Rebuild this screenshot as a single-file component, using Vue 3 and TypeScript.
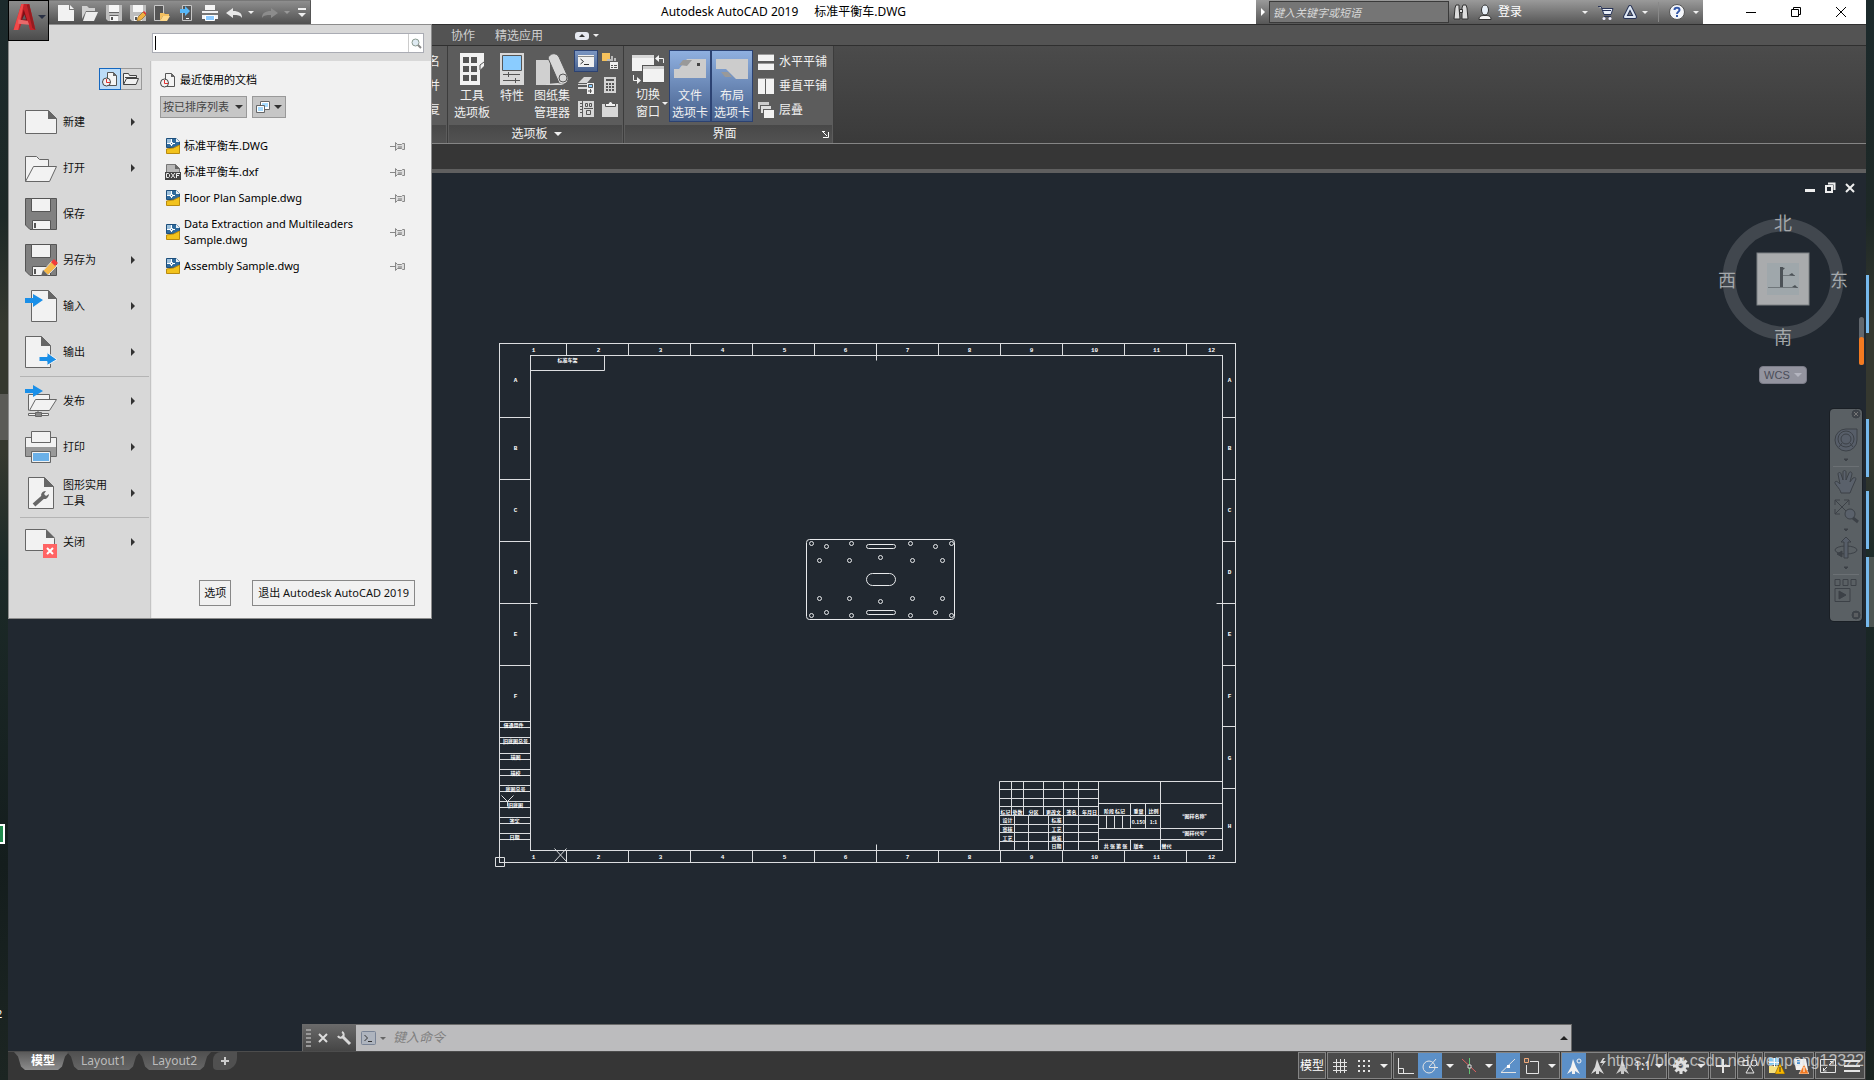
<script setup lang="ts">
import { ref } from 'vue'

interface MenuEntry { label: string; icon: string; arrow: boolean; sep?: boolean }
interface RecentFile { name: string; kind: 'dwg' | 'dxf' }
interface Line { x1: number; y1: number; x2: number; y2: number }
interface Label { x: number; y: number; t: string }

const G = 'fill="#f2f2f2" stroke="#666"'
const S = 'fill="none" stroke="#e4e4e4"'
const ARROW_R = 'fill="#1a8fe8"'

const icons: Record<string, string> = {
  logo: '<path fill="#c4232a" d="M12 1h10l8 25h-7l-2-6h-9l-3 6H2z"/><path fill="#f04a4a" d="M12 1h3L8 26H2z"/><path fill="#7e0f16" d="M15 6l-4 12h9z"/><path fill="#5d5d5d" d="M16 11l-3 5h5z"/><path fill="#e8696a" d="M8 16l12 1 2 4-14-1z"/><path fill="#961c20" d="M19 2l3-1 8 25-4-2z"/>',
  qnew: '<path fill="#f2f2f2" d="M0 2h11v5h5v11H0z"/><path fill="#f2f2f2" d="M12 2l4 4h-4z"/>',
  qopen: '<path fill="#d0d0d0" d="M0 3h5l2 2h6v3H4L0 16z"/><path fill="#ededed" d="M4 9h12l-4 9H1z"/>',
  qsave: '<path fill="#bdbdbd" d="M0 2h16v16H2l-2-2z"/><path fill="#f5f5f5" d="M3 2h10v7H3zM4 13h8v5H4z"/><path fill="#555" d="M5 14h2v3H5z"/><path stroke="#666" d="M3 9.500h10M3.500 12.500h9"/>',
  qsaveas: '<path fill="#bdbdbd" d="M0 2h16v16H2l-2-2z"/><path fill="#f5f5f5" d="M3 2h10v7H3zM4 13h8v5H4z"/><path fill="#555" d="M5 14h2v3H5z"/><path fill="#f0b040" stroke="#7a5a20" stroke-width=".6" d="M7 18l1-4 5-5 3 3-5 5z"/><path fill="#e83030" d="M13 9l1-1 3 3-1 1z"/>',
  qmobopen: '<path fill="#555" stroke="#c8c8c8" d="M.5 2.500h9v15h-9z"/><path fill="#f4c060" d="M6 10h4l1 1h4v2h-6l-3 5z"/><path fill="#ffd98a" d="M9 13h7l-3 5H6z"/>',
  qmobsave: '<path fill="#555" stroke="#c8c8c8" d="M4.500 2.500h9v15h-9z"/><path fill="#f2f2f2" d="M8 15h3v1H8z"/><path fill="#58b8f8" d="M2 6h5V3l5 5-5 5v-3H2z"/>',
  qprint: '<path fill="#f4f4f4" d="M3 2h10v5H3zM0 8h16v8H0z"/><path fill="#777" d="M0 10h16v2H0z"/><path fill="#8ccaff" stroke="#fff" d="M3.500 12.500h9v5h-9z"/>',
  undo: '<path fill="#e8e8e8" d="M0 9l7-5v3c6 0 9 2 9 7-2-3-4-3-9-3v3z"/>',
  redo: '<path fill="#8c8c8c" d="M16 9L9 4v3C3 7 0 9 0 14c2-3 4-3 9-3v3z"/>',
  mnew: `<path ${G} d="M.5 4.500h23l8 8v15H.5z"/><path fill="#666" d="M23 4l9 9h-9z"/>`,
  mopen: `<path ${G} d="M.5 29.500v-25h11l3 3h9v9"/><path ${G} d="M.5 29.500l8-15h23l-7 15z"/>`,
  msave: '<path fill="#808080" stroke="#555" d="M.5.500h31v31H5l-4.500-4.500z"/><path fill="#f2f2f2" stroke="#555" d="M6.500.500h19v13h-19zM7.500 22.500h18v9h-18z"/><path fill="#555" d="M9 25h2v5H9z"/>',
  msaveas: '<path fill="#808080" stroke="#555" d="M.5.500h31v31H5l-4.500-4.500z"/><path fill="#f2f2f2" stroke="#555" d="M6.500.500h19v13h-19zM7.500 22.500h18v9h-18z"/><path fill="#555" d="M9 25h2v5H9z"/><path fill="#f6b84a" stroke="#d8d8d8" d="M18 27l9-10 5 5-9 9z"/><path fill="#666" d="M16 32l2-6 5 5z"/><path fill="#f03a3a" d="M26 18l3-3 4 4-3 3z"/>',
  mimport: `<path ${G} d="M6.500.500h17l8 8v23h-25z"/><path fill="#666" d="M23 0l9 9h-9z"/><path ${ARROW_R} d="M0 8h8V4l10 6-10 7v-4H0z"/>`,
  mexport: `<path ${G} d="M.5.500h16l9 9v22H.500z"/><path fill="#666" d="M16 0l10 10H16z"/><path ${ARROW_R} stroke="#f2f2f2" d="M14 20.500h8v-4l10 7-10 6v-4h-8z"/>`,
  mpublish: `<path ${G} d="M3.500 25.500v-16h21v6"/><path ${G} d="M4.500 25.500l6-11h21l-7 11z"/><path ${ARROW_R} d="M0 4h8V0l10 6-10 6V8H0z"/><path ${G} d="M3.500 28.500h20v2h-20z"/><path fill="#888" stroke="#666" d="M10.500 27.500h6v4h-6zM13 26v1"/>`,
  mprint: `<path fill="#f2f2f2" stroke="#666" d="M.5 6.500h31v19H.5z"/><path fill="#999" d="M1 16h30v9H1z"/><path ${G} d="M6.500.500h19v11h-19z"/><path fill="#6ab0e8" stroke="#666" d="M6.500 20.500h19v11h-19z"/><path fill="none" stroke="#f2f2f2" d="M7.500 21.500h17v9h-17z"/>`,
  mutil: `<path ${G} d="M3.500.500h16l9 9v22h-25z"/><path fill="#666" d="M19 0l10 10H19z"/><path fill="none" stroke="#666" stroke-width="4" d="M9 28l9-8"/><path fill="#666" d="M16 18a5 5 0 0 1 5-4l-2 3 2 2 3-2a5 5 0 0 1-6 5z"/>`,
  mclose: `<path ${G} d="M.5 3.500h20l9 9v12H.5z"/><path fill="#666" d="M21 3l9 9h-9z"/><path fill="#ff6464" d="M18 18h14v14H18z"/><path stroke="#fff" stroke-width="2" d="M22 22l6 6M28 22l-6 6"/>`,
  recent: '<path fill="#f4f4f4" stroke="#555" d="M5.500.500h6l3 3v10h-9z"/><path fill="#666" d="M11 0l4 4h-4z"/><circle cx="4.500" cy="10" r="4" fill="#f2f2f2" stroke="#444"/><path fill="none" stroke="#e03030" d="M4.500 7v3.500H8"/>',
  folder: '<path fill="#f0f0f0" stroke="#444" d="M.5 13.500v-11h5l1 2h7v3"/><path fill="#f0f0f0" stroke="#444" d="M.5 13.500l3-6h12l-2.500 6z"/><path stroke="#444" d="M2 6.500h11"/>',
  dwg: '<path fill="#2f6a9c" stroke="#1d4f7c" d="M1.500.500h10l3 3v6h-13z"/><path fill="#9cc0dc" d="M2 1h4v4H2z"/><path stroke="#fff" fill="none" d="M6.500 1v7M2 5.500h8"/><path fill="#2f6a9c" stroke="#fff" d="M5.500 4.500h2v2h-2z"/><path fill="#f2c21c" stroke="#b88a10" d="M1.500 11l7-1 6-3v8.500h-13z"/><path fill="#e6eef5" d="M11 0l4 4h-4z"/>',
  dxf: '<path fill="#b8b8b8" stroke="#777" d="M1.500.500h9l4 4v11h-13z"/><path fill="#666" d="M10 0l5 5h-5z"/><path fill="#444" d="M0 8h16v8H0z"/><path fill="none" stroke="#eee" d="M1.500 9.500v4h2l1-1v-2l-1-1zM6 9l4 5M10 9l-4 5M11.500 14V9.500H15M11.500 11.500H14"/>',
  pin: '<path stroke="#888" fill="none" d="M0 5.500h5"/><path stroke="#888" fill="#ddd" d="M5.500 1.500v8l2-2h4l1 1h2v-6h-2l-1 1h-4z"/><path fill="#aaa" d="M8 5h4v2H8z"/>',
  magnifier: '<circle cx="4.500" cy="4.500" r="3.500" fill="#dfeaf2" stroke="#8a9a90"/><path stroke="#888" stroke-width="2" d="M7 7l3 3"/>',
  cascade: '<path fill="#a8dcff" stroke="#fff" stroke-width="2" d="M5 1h8v6H5z"/><path fill="none" stroke="#666" d="M4.500.500h9v8h-9z"/><path fill="#a8dcff" stroke="#666" d="M.5 4.500h8v7h-8z"/><path fill="none" stroke="#fff" d="M1.500 5.500h6v5h-6z"/>',
  toolpal: '<path fill="#f2f2f2" d="M0 0h24v13l-4 4v15H0z"/><path fill="#555" d="M3 4h6v6H3zM11 4h6v6h-6zM3 13h6v6H3zM11 13h6v6h-6zM3 22h6v6H3zM11 22h6v6h-6z"/><path stroke="#555" fill="none" d="M20 17v-5l4-3"/>',
  props: '<path fill="#d8d8d8" d="M0 0h24v32H0z"/><path fill="#8accff" stroke="#555" d="M2.500 2.500h19v15h-19z"/><path stroke="#555" d="M3 21.500h17M3 27.500h17M8.500 19v5M15.500 25v5"/>',
  sheets: '<path fill="#d0d0d0" d="M0 7h14v25H0z"/><path fill="#d8d8d8" stroke="#5a5a5a" d="M12 5c2-5 8-6 11-1l9 20c1 7-6 9-9 6z"/><path fill="#d8d8d8" d="M10 31l12-1 6 2H10z"/><circle cx="27" cy="25" r="4" fill="#d8d8d8" stroke="#555"/>',
  cmd: '<path fill="#f0f0f0" d="M0 2h16v12H0z"/><path stroke="#888" d="M0 3.500h16"/><path stroke="#333" fill="none" d="M2.500 6l3 2.500-3 2.500M6 11.500h5"/>',
  markup: '<path fill="#f6c25c" d="M0 0h8v8H0z"/><path fill="#bbb" d="M5 6h6v2H5zM9 3h2v9H9zM12 5h2v3h-2z"/><path fill="#f0f0f0" stroke="#5a5a5a" d="M7.500 8.500h9v8h-9z"/><path stroke="#555" d="M9 12.500h2M12 12.500h3M9 14.500h2M12 14.500h3"/>',
  layers: '<path fill="#d8d8d8" d="M6 0h8l-5 6H0zM0 7h9v1H0zM0 10h9v2H0z"/><path fill="#f0f0f0" d="M9 6h7v11H9z"/><path fill="#8accff" stroke="#555" d="M10.500 7.500h4v3h-4z"/><path stroke="#555" d="M10 14h4M12.500 12v4"/>',
  calc: '<path fill="#d4d4d4" d="M2 0h12v16H2z"/><path fill="#555" d="M4 2h8v2H4zM4 6h2v2H4zM7 6h2v2H7zM10 6h2v2h-2zM4 9h2v2H4zM7 9h2v2H7zM10 9h2v2h-2zM4 12h2v2H4zM7 12h2v2H7zM10 12h2v2h-2z"/>',
  design: '<path fill="#d8d8d8" d="M0 0h4v16H0zM5 0h11v16H5z"/><path stroke="#555" fill="none" d="M2 2.500h2M2 5.500h2M2 8.500h2M2 11.500h2M7.500 2.500h2v3h-2zM11.500 2.500h2v3h-2zM8.500 9.500h4v4h-4zM6 7.500h9"/>',
  clip: '<path fill="#d8d8d8" d="M0 3h16v13H0z"/><path fill="#f2f2f2" stroke="#555" d="M3.500 2.500h3l1-2h2l1 2h3v3h-10z"/>',
  switchwin: '<path fill="#d8d8d8" d="M0 2h22v3H0z"/><path fill="#f2f2f2" d="M0 5h22v13H0z"/><path fill="#555" d="M10 12h22v18H10z"/><path fill="#ccc" d="M11 13h21v3H11z"/><path fill="#f2f2f2" d="M11 16h21v13H11z"/><path stroke="#f2f2f2" fill="none" d="M31.500 10V5.500H26M1.500 22v5.500H6"/><path fill="#f2f2f2" d="M23 5.500l4-3.500v7zM9 27.500L5 24v7z"/>',
  filetab: '<path fill="#ccc" d="M0 11h5l8-10h19v19H0z"/><path fill="#999" d="M5 7l4-5h9l-5 6z"/><path fill="#444" d="M23 5h3v3h-3z"/>',
  layouttab: '<path fill="#ccc" d="M0 2h32v20H20L10 12H0z"/><path fill="#999" d="M5 15h7l4 5H9z"/>',
  tileh: '<path fill="#f2f2f2" d="M0 0h16v7H0zM0 9h16v7H0z"/><path stroke="#999" d="M0 .500h16M0 9.500h16"/>',
  tilev: '<path fill="#f2f2f2" d="M0 0h7v16H0zM8 0h8v16H8z"/><path stroke="#999" d="M0 .500h16"/>',
  stack: '<path fill="#ccc" d="M0 0h11v3H2v4H0z"/><path fill="#ddd" d="M3 4h10v3H5v4H3z"/><path fill="#f2f2f2" d="M6 8h10v8H6z"/>',
  binoc: '<path fill="#ddd" stroke="#333" d="M3 1h3v3l1 11H1L2 4zM10 1h3l1 3 1 11H9V4z"/><path fill="#ddd" stroke="#333" d="M6.500 5.500h3v3h-3z"/>',
  person: '<ellipse cx="8" cy="6" rx="3.500" ry="5" fill="#e8f0f8" stroke="#333"/><path fill="#f4f4f4" stroke="#333" d="M2 15.500c0-4 3-4 6-4s6 0 6 4z"/>',
  cart: '<path fill="#e8eef8" stroke="#2a3558" d="M1 2.500h3l3 8h7l2-6H5"/><path stroke="#2a3558" stroke-width="1" fill="none" d="M6 6.500h8M7 12.500h7"/><circle cx="7" cy="14.500" r="1.500" fill="#eef"/><circle cx="13" cy="14.500" r="1.500" fill="#eef"/>',
  a360: '<path fill="none" stroke="#2a3558" stroke-width="4" stroke-linejoin="round" d="M8 3l5 10H3z"/><path fill="none" stroke="#dfe8f4" stroke-width="2" stroke-linejoin="round" d="M8 3l5 10H3z"/>',
  help: '<circle cx="8" cy="8" r="7.500" fill="#f4f6fa" stroke="#555"/><path fill="none" stroke="#3458a8" stroke-width="2" d="M5.500 6c0-3 5-3 5 0 0 2-2.500 1.500-2.500 4"/><path fill="#3458a8" d="M7 11h2v2H7z"/>',
  wrench: '<path stroke="#d8d8d8" stroke-width="3" d="M5 5l8 8"/><path fill="none" stroke="#d8d8d8" stroke-width="2" d="M5 1a3 3 0 1 1-4 4"/>',
  prompt: '<rect x=".5" y=".5" width="14" height="13" rx="1" fill="#aeb4be" stroke="#7a8496"/><path fill="none" stroke="#333" d="M3.500 4l3 3-3 3M7 10.500h4"/>',
  grid: `<path ${S} stroke-width="1" d="M4.500 1v14M8.500 1v14M12.500 1v14M1 4.500h14M1 8.500h14M1 12.500h14"/>`,
  dots: '<path fill="#e4e4e4" d="M2 2h2v2H2zM7 2h2v2H7zM12 2h2v2h-2zM2 7h2v2H2zM7 7h2v2H7zM12 7h2v2h-2zM2 12h2v2H2zM7 12h2v2H7zM12 12h2v2h-2z"/>',
  ortho: `<path ${S} d="M.5 0v15.500H16M.5 10.500h5v5"/>`,
  polar: `<circle cx="7" cy="9" r="6" ${S}/><path ${S} d="M7 9l7-8M7 9.500h9"/>`,
  iso: '<path stroke="#e06060" d="M1 1l14 13"/><path stroke="#60c070" d="M8.500 0v16"/><path fill="#333" stroke="#ddd" d="M7 7h3v3H7z"/>',
  otrack: `<path ${S} d="M15 1L1 14.500h15"/><path fill="#fff" d="M7 7h3v3H7z"/>`,
  osnap: `<path ${S} d="M6 3.500h8.500v12h-12V7"/><path fill="#555" stroke="#f0a878" d="M.5.500h4v4h-4z"/>`,
  annoA: '<path fill="#f2f2f2" d="M7 1l3 8 4 7-5-3v3H6v-3l-5 3 4-7z"/><circle cx="13" cy="3" r="2" fill="none" stroke="#f2f2f2"/>',
  annoB: '<path fill="#d8d8d8" d="M7 1l3 8 4 7-5-3v3H6v-3l-5 3 4-7z"/><path fill="#d8d8d8" d="M13 0l-3 5h3l-2 4 5-6h-3l2-3z"/>',
  annoC: '<path fill="#c8c8c8" d="M8 1l3 8 4 7-5-3v3H7v-3l-5 3 4-7z"/>',
  gear: '<circle cx="8" cy="8" r="4" fill="none" stroke="#e0e0e0" stroke-width="3"/><path stroke="#e0e0e0" stroke-width="3" d="M8 0v3M8 13v3M0 8h3M13 8h3M2.500 2.500l2 2M11.500 11.500l2 2M13.500 2.500l-2 2M4.500 11.500l-2 2"/>',
  plus: `<path ${S} stroke-width="2" d="M8 1v14M1 8h14"/>`,
  isolate: `<path ${S} d="M1 2.500h5v5H1zM8 8l4 7H4z"/><circle cx="12" cy="5" r="3" ${S}/>`,
  hw: '<path fill="#7cc4f4" d="M0 0h10v7H0z"/><path fill="#f4e080" d="M0 8h10v7H0z"/><path stroke="#fff" d="M0 4.500h10M5.500 0v9"/><path fill="#f8b800" stroke="#805800" stroke-width=".6" d="M11 5l5 11H6z"/><path stroke="#333" d="M11 9v5"/>',
  trust: '<path fill="#f0f0f0" d="M1 1h12l2 11H3z"/><path fill="#4a90d0" d="M4 2h3v4H4z"/><path fill="#f07820" stroke="#fff" stroke-width=".6" d="M11 6l5 10H6z"/><path stroke="#fff" d="M11 9v5"/>',
  clean: `<path ${S} d="M.5 1.500h15v13H.5z"/><path ${S} d="M9 7l4-4M10 3.500h3v3M7 9l-4 4M3.500 10v3h3"/>`,
  custom: '<path fill="#e4e4e4" d="M0 2h16v2H0zM0 7h16v2H0zM0 12h16v2H0z"/>',
}

const qat = ['qnew', 'qopen', 'qsave', 'qsaveas', 'qmobopen', 'qmobsave', 'qprint']

const menu: MenuEntry[] = [
  { label: '新建', icon: 'mnew', arrow: true },
  { label: '打开', icon: 'mopen', arrow: true },
  { label: '保存', icon: 'msave', arrow: false },
  { label: '另存为', icon: 'msaveas', arrow: true },
  { label: '输入', icon: 'mimport', arrow: true },
  { label: '输出', icon: 'mexport', arrow: true },
  { label: '发布', icon: 'mpublish', arrow: true, sep: true },
  { label: '打印', icon: 'mprint', arrow: true },
  { label: '图形实用工具', icon: 'mutil', arrow: true },
  { label: '关闭', icon: 'mclose', arrow: true, sep: true },
]

const recentFiles: RecentFile[] = [
  { name: '标准平衡车.DWG', kind: 'dwg' },
  { name: '标准平衡车.dxf', kind: 'dxf' },
  { name: 'Floor Plan Sample.dwg', kind: 'dwg' },
  { name: 'Data Extraction and Multileaders Sample.dwg', kind: 'dwg' },
  { name: 'Assembly Sample.dwg', kind: 'dwg' },
]

const smallTools = ['cmd', 'markup', 'layers', 'calc', 'design', 'clip']
const tiles = [
  { label: '水平平铺', icon: 'tileh' },
  { label: '垂直平铺', icon: 'tilev' },
  { label: '层叠', icon: 'stack' },
]

/* '▾' is a drop-down arrow, a leading '*' marks a tool that is switched on */
const statusGroups: string[][] = [
  ['模型'],
  ['grid', 'dots', '▾'],
  ['ortho', '*polar', '▾', 'iso', '▾', '*otrack', 'osnap', '▾'],
  ['*annoA', 'annoB', 'annoC', '1:1', '▾'],
  ['gear', '▾'],
  ['plus'],
  ['isolate'],
  ['hw', 'trust'],
  ['clean', 'custom'],
]
const bare = (s: string) => s.replace('*', '')

const search = ref('')
const command = ref('')
const keyword = ref('')

/* drawing sheet geometry */
const h = (y: number, x1: number, x2: number): Line => ({ x1, y1: y, x2, y2: y })
const v = (x: number, y1: number, y2: number): Line => ({ x1: x, y1, x2: x, y2 })
const cols = Array.from({ length: 11 }, (_, i) => 566 + i * 62)
const sheet: Line[] = [
  ...cols.map(x => v(x, 344, 356)),
  ...cols.map(x => v(x, 851, 863)),
  v(876, 344, 361), v(876, 845, 863),
  ...[418, 480, 542, 604, 666].map(y => h(y, 499, 530)),
  ...[418, 480, 542, 604, 666, 727, 789].map(y => h(y, 1222, 1235)),
  h(604, 499, 537), h(604, 1216, 1235),
  h(371, 530, 604), v(604, 356, 371),
  ...[722, 728, 738, 744, 754, 760, 770, 776, 786, 792, 802, 808, 818, 824, 834, 840].map(y => h(y, 499, 530)),
  h(782, 999, 1222), v(999, 782, 851),
  ...[790, 799, 807, 816, 825, 833, 842].map(y => h(y, 999, 1098)),
  ...[1011, 1023, 1043].map(x => v(x, 782, 816)),
  ...[1014, 1028, 1048].map(x => v(x, 816, 851)),
  ...[1063, 1078, 1098, 1160].map(x => v(x, 782, 851)),
  h(804, 1098, 1222), h(816, 1098, 1160), h(829, 1098, 1222), h(840, 1098, 1222),
  v(1130, 804, 829), v(1130, 840, 851), v(1145, 804, 829),
  ...[1106, 1114, 1122].map(x => v(x, 816, 829)),
]
const numX = [533, 598, 660, 722, 784, 845, 907, 969, 1031, 1094, 1156, 1211]
const marks: Label[] = [
  ...numX.flatMap((x, i) => [{ x, y: 352, t: String(i + 1) }, { x, y: 859, t: String(i + 1) }]),
  ...['A', 'B', 'C', 'D', 'E', 'F'].map((t, i) => ({ x: 515, y: [382, 450, 512, 574, 636, 698][i], t })),
  ...['A', 'B', 'C', 'D', 'E', 'F', 'G', 'H'].map((t, i) => ({ x: 1229, y: [382, 450, 512, 574, 636, 698, 760, 828][i], t })),
]
const notes: Label[] = [
  { x: 567, y: 362, t: '标准车架' }, { x: 513, y: 727, t: '借通用件' }, { x: 515, y: 743, t: '旧底图总号' },
  { x: 515, y: 759, t: '描图' }, { x: 515, y: 775, t: '描校' }, { x: 515, y: 791, t: '底图总号' },
  { x: 515, y: 807, t: '旧底图' }, { x: 514, y: 823, t: '签字' }, { x: 514, y: 839, t: '日期' },
  { x: 1005, y: 814, t: '标记' }, { x: 1017, y: 814, t: '处数' }, { x: 1033, y: 814, t: '分区' },
  { x: 1053, y: 814, t: '更改文' }, { x: 1071, y: 814, t: '签名' }, { x: 1089, y: 814, t: '年月日' },
  { x: 1007, y: 822, t: '设计' }, { x: 1007, y: 831, t: '审核' }, { x: 1007, y: 840, t: '工艺' },
  { x: 1056, y: 822, t: '标准' }, { x: 1056, y: 831, t: '工艺' }, { x: 1056, y: 840, t: '批准' }, { x: 1056, y: 848, t: '日期' },
  { x: 1114, y: 813, t: '阶段 标记' }, { x: 1138, y: 813, t: '重量' }, { x: 1153, y: 813, t: '比例' },
  { x: 1138, y: 824, t: '0.150' }, { x: 1153, y: 824, t: '1:1' }, { x: 1194, y: 818, t: '“图样名称”' },
  { x: 1194, y: 835, t: '“图样代号”' }, { x: 1115, y: 848, t: '共 张 第 张' }, { x: 1138, y: 848, t: '版本' }, { x: 1166, y: 848, t: '替代' },
]
const holes = [
  [811, 544], [826, 547], [851, 544], [910, 544], [935, 547], [951, 544],
  [819, 561], [849, 561], [880, 558], [912, 561], [942, 561],
].flatMap(([x, y]) => [[x, y], [x, 1160 - y]])
</script>

<template>
  <div class="desktop">
    <div class="edge edge-left">
      <i class="edge-block"></i><i class="edge-green"></i><span class="edge-num">2</span>
    </div>

    <div class="app">
      <header class="titlebar">
        <button class="app-btn" aria-label="应用程序菜单">
          <svg width="25" height="28" viewBox="0 0 32 27" preserveAspectRatio="none" v-html="icons.logo"></svg>
          <i class="tri navy"></i>
        </button>
        <nav class="qat">
          <button v-for="q in qat" :key="q" :aria-label="q"><svg width="16" height="20" v-html="icons[q]"></svg></button>
          <button aria-label="放弃"><svg width="16" height="18" v-html="icons.undo"></svg></button>
          <i class="tri small"></i>
          <button aria-label="重做"><svg width="16" height="18" v-html="icons.redo"></svg></button>
          <i class="tri small dim"></i>
          <span class="qat-more"><i class="bar"></i><i class="tri"></i></span>
        </nav>
        <h1 class="title"><span>Autodesk AutoCAD 2019</span><span>标准平衡车.DWG</span></h1>
        <div class="infocenter">
          <i class="tri right"></i>
          <input v-model="keyword" aria-label="搜索" placeholder="键入关键字或短语">
          <svg width="16" height="16" v-html="icons.binoc"></svg>
          <button class="login"><svg width="16" height="16" v-html="icons.person"></svg>登录</button>
          <i class="tri small"></i>
          <svg class="cart" width="17" height="17" v-html="icons.cart"></svg>
          <svg width="16" height="16" v-html="icons.a360"></svg>
          <i class="tri small near"></i>
          <span class="vsep"></span>
          <svg width="16" height="16" v-html="icons.help"></svg>
          <i class="tri small"></i>
        </div>
        <div class="winbtns">
          <button aria-label="最小化"><svg width="12" height="12"><path d="M1 6.500h10" stroke="#000" /></svg></button>
          <button aria-label="还原"><svg width="12" height="12"><path d="M1.500 3.500h7v7h-7zM3.500 3V1.500h7v7H9" fill="none" stroke="#000" /></svg></button>
          <button aria-label="关闭"><svg width="12" height="12"><path d="M1 1l10 10M11 1L1 11" stroke="#000" /></svg></button>
        </div>
      </header>

      <nav class="tabs">
        <a href="#">协作</a><a href="#">精选应用</a>
        <span class="pill"><i></i></span><i class="tri small"></i>
      </nav>

      <section class="ribbon">
        <div class="panel hidden-panel">
          <div class="panel-body clipped"><span>命名</span><span>合并</span><span>恢复</span></div>
          <div class="panel-title"></div>
        </div>
        <div class="panel palettes">
          <div class="panel-body">
            <button class="big"><svg width="24" height="32" v-html="icons.toolpal"></svg><span>工具<br>选项板</span></button>
            <button class="big"><svg width="24" height="32" v-html="icons.props"></svg><span>特性</span></button>
            <button class="big"><svg width="32" height="32" v-html="icons.sheets"></svg><span>图纸集<br>管理器</span></button>
            <div class="small-grid">
              <button v-for="(t, i) in smallTools" :key="t" :class="{ on: i === 0 }" :aria-label="t"><svg width="17" height="17" v-html="icons[t]"></svg></button>
            </div>
          </div>
          <div class="panel-title">选项板 <i class="tri"></i></div>
        </div>
        <div class="panel ui">
          <div class="panel-body">
            <button class="big switch"><svg width="32" height="31" v-html="icons.switchwin"></svg><span>切换<br>窗口</span><i class="tri small"></i></button>
            <button class="big on"><svg width="32" height="32" viewBox="0 -5 32 32" v-html="icons.filetab"></svg><span>文件<br>选项卡</span></button>
            <button class="big on"><svg width="32" height="32" viewBox="0 -4 32 32" v-html="icons.layouttab"></svg><span>布局<br>选项卡</span></button>
            <div class="tiles">
              <button v-for="t in tiles" :key="t.icon"><svg width="16" height="16" v-html="icons[t.icon]"></svg>{{ t.label }}</button>
            </div>
          </div>
          <div class="panel-title">界面
            <svg class="launcher" width="7" height="7"><path d="M0 .500h3M1 1l4 4M6.500 1v5.500H1" fill="none" stroke="#fff" /></svg>
          </div>
        </div>
      </section>
      <div class="strip"></div>

      <main class="canvas">
        <svg class="drawing">
          <g transform="translate(-7.500 -173.500)">
            <g class="ink">
              <rect x="499" y="344" width="736" height="519" /><rect x="530" y="356" width="692" height="495" />
              <line v-for="(l, i) in sheet" :key="i" v-bind="l" />
            </g>
            <g class="plate">
              <rect x="806" y="540" width="148" height="80" rx="3" />
              <circle v-for="(p, i) in holes" :key="i" :cx="p[0]" :cy="p[1]" r="2" />
              <rect x="866" y="545" width="29" height="4" rx="2" /><rect x="866" y="611" width="29" height="4" rx="2" />
              <rect x="866" y="574" width="29" height="12" rx="6" />
            </g>
            <g class="ucs">
              <path d="M495 858h9v9h-9zM499 863V812M499 863h51M554 849l12 13M566 849l-12 13M501 796l6 6 6-6M507 802v5" />
            </g>
            <text v-for="(m, i) in marks" :key="'m' + i" class="mark" :x="m.x" :y="m.y">{{ m.t }}</text>
            <text v-for="(n, i) in notes" :key="'n' + i" class="note" :x="n.x" :y="n.y">{{ n.t }}</text>
          </g>
        </svg>

        <div class="docbtns">
          <button aria-label="最小化"><svg width="12" height="12"><path d="M1 7h10v3H1z" fill="#eee" /></svg></button>
          <button aria-label="还原"><svg width="12" height="12"><path d="M2 4h6v6H2zM4 1.500h6.500V8" fill="none" stroke="#eee" stroke-width="2" /></svg></button>
          <button aria-label="关闭"><svg width="12" height="12"><path d="M2 2l8 8M10 2l-8 8" stroke="#eee" stroke-width="2" /></svg></button>
        </div>

        <div class="viewcube">
          <svg width="132" height="132">
            <circle cx="66" cy="66" r="54" fill="none" stroke="#41474e" stroke-width="13" />
            <rect x="40" y="40" width="52" height="52" fill="#a9abad" stroke="#7c8083" />
            <rect x="50" y="50" width="32" height="32" fill="#9fa7ab" />
            <path d="M63 54h3v20h-3z" fill="#4c5257" /><path d="M66 62h12v1H66zM51 74h30v1H51z" fill="#70777b" />
            <path d="M63 54l5 1-2 2zM72 62l3-2 3 3zM75 74l3-2 3 3z" fill="#4c5257" />
            <g class="compass"><text x="66" y="17">北</text><text x="66" y="131">南</text><text x="10" y="74">西</text><text x="122" y="74">东</text></g>
          </svg>
          <button class="wcs">WCS <i></i></button>
        </div>

        <div class="navbar">
          <svg width="32" height="212" fill="none" stroke="#3c4147" stroke-width="1">
            <circle cx="26" cy="5" r="4" fill="#3f444a" /><path d="M24 3l4 4M28 3l-4 4" stroke="#777" />
            <path d="M16 20h11v11a11 11 0 1 1-11-11z" fill="#575e69" /><circle cx="16" cy="30" r="8" /><circle cx="16" cy="30" r="5" /><path d="M12 34l-3 4M20 34l3 4" />
            <path d="M14 50h4l-2 2zM14 120h4l-2 2zM14 158h4l-2 2z" fill="#3c4147" />
            <path d="M3 57.500h26M3 165.500h26" stroke="#6b7074" />
            <path d="M11 84c-1-5-7-9-6-11s4 1 5 2L8 65c0-2 3-2 3 0l2 6V63c0-2 3-2 3 0v8l3-7c1-2 3-1 3 1l-2 8 3-4c2-1 3 0 3 1l-4 9-2 5z" fill="#5a616b" />
            <path d="M5 91l14 14M19 91L5 105M5 96v-5h5M14 91h5v5M5 100v5h5" /><circle cx="20" cy="105" r="5" fill="#5a616b" /><path d="M23 109l5 4" stroke-width="3" />
            <ellipse cx="16" cy="141" rx="11" ry="4" /><path d="M14 149v-16h-3l5-5 5 5h-3v16z" fill="#575e69" /><path d="M7 145l5-3v6z" fill="#3c4147" />
            <path d="M5 170.500h5v6H5zM13 170.500h5v6h-5zM21 170.500h5v6h-5zM5 179.500h15v13H5z" /><path d="M9 182l7 4-7 4z" fill="#3c4147" />
            <circle cx="26" cy="206" r="4" fill="#3f444a" /><path d="M24 205h4M24 207h4" stroke="#777" />
          </svg>
        </div>
        <div class="gauge"><i></i></div>

        <div class="cmdline">
          <div class="cmd-tools">
            <i class="grip"></i>
            <svg width="10" height="10"><path d="M1 1l8 8M9 1L1 9" stroke="#ddd" stroke-width="2" /></svg>
            <svg class="custom" width="15" height="15" v-html="icons.wrench"></svg>
          </div>
          <svg class="prompt" width="15" height="14" v-html="icons.prompt"></svg>
          <i class="tri small gray"></i>
          <input v-model="command" aria-label="命令行" placeholder="键入命令">
          <i class="up"></i>
        </div>
      </main>

      <footer class="bottom">
        <nav class="layouts">
          <button class="layout active">模型</button>
          <button class="layout">Layout1</button>
          <button class="layout">Layout2</button>
          <button class="layout add" aria-label="新建布局"><svg width="8" height="8"><path d="M4 0v8M0 4h8" stroke="#ccc" stroke-width="2" /></svg></button>
        </nav>
        <div class="status">
          <div v-for="(g, i) in statusGroups" :key="i" class="group">
            <template v-for="(s, j) in g" :key="j">
              <button v-if="s === '▾'" class="drop" aria-label="更多"><i class="tri"></i></button>
              <button v-else-if="icons[bare(s)]" class="tool" :class="{ on: s[0] === '*' }" :aria-label="bare(s)"><svg width="16" height="16" v-html="icons[bare(s)]"></svg></button>
              <button v-else class="word">{{ s }}</button>
            </template>
          </div>
        </div>
      </footer>

      <aside class="appmenu">
        <div class="search">
          <input v-model="search" aria-label="搜索命令"><i class="caret"></i>
          <button aria-label="搜索"><svg width="11" height="11" v-html="icons.magnifier"></svg></button>
        </div>
        <div class="menu-cols">
          <div class="menu-left">
            <div class="toggles">
              <button class="sel" aria-label="最近使用的文档"><svg width="16" height="15" v-html="icons.recent"></svg></button>
              <button aria-label="打开的文档"><svg width="16" height="16" v-html="icons.folder"></svg></button>
            </div>
            <button v-for="m in menu" :key="m.label" class="entry" :class="{ sep: m.sep }">
              <svg width="33" height="33" v-html="icons[m.icon]"></svg>
              <span>{{ m.label }}</span>
              <i v-if="m.arrow" class="tri right dark"></i>
            </button>
          </div>
          <div class="menu-right">
            <h2><svg width="16" height="15" v-html="icons.recent"></svg>最近使用的文档</h2>
            <div class="combos">
              <label class="combo"><select aria-label="排序"><option>按已排序列表</option></select><i class="tri dark"></i></label>
              <button class="combo view" aria-label="显示方式"><svg width="14" height="13" v-html="icons.cascade"></svg><i class="tri dark"></i></button>
            </div>
            <ul>
              <li v-for="f in recentFiles" :key="f.name">
                <svg width="16" height="16" v-html="icons[f.kind]"></svg>
                <a href="#">{{ f.name }}</a>
                <svg class="pin" width="16" height="11" v-html="icons.pin"></svg>
              </li>
            </ul>
            <div class="actions"><button>选项</button><button>退出 Autodesk AutoCAD 2019</button></div>
          </div>
        </div>
      </aside>
    </div>

    <div class="edge edge-right"><i class="b1"></i><i class="b2"></i><i class="b3"></i><i class="b4"></i></div>
    <div class="watermark">https://blog.csdn.net/wenpeng12322</div>
  </div>
</template>

<style>
body { margin: 0; background: #1b2425; }
</style>

<style scoped>
* { box-sizing: border-box; }
.desktop { position: relative; display: flex; min-height: 100vh; font: 12px/16px "Noto Sans", "Noto Sans CJK SC", sans-serif; color: #e6e6e6; }
button, input, select { font: inherit; color: inherit; border: 0; padding: 0; margin: 0; background: none; border-radius: 0; outline: 0; }
a { color: inherit; text-decoration: none; }
svg { display: block; flex: none; }
.edge { position: relative; width: 8px; flex: none; overflow: hidden; background: linear-gradient(#1c2a2c 0, #1d2826 20%, #35382f 30%, #35382f 42%, #1c2a28 52%, #141d1d 80%, #1c2522); }
.edge i, .edge span { position: absolute; }
.edge-block { left: 0; top: 394px; width: 8px; height: 46px; background: #5b5b57; }
.edge-green { left: -4px; top: 824px; width: 9px; height: 20px; border: 2px solid #fff; background: #1f8a4c; }
.edge-num { left: -4px; bottom: 58px; color: #fff; font-size: 11px; }
.edge-right i { left: 0; width: 3px; background: #76b9ed; }
.edge-right .b1 { top: 275px; height: 58px; }
.edge-right .b2 { top: 419px; height: 58px; }
.edge-right .b3 { top: 491px; height: 58px; }
.edge-right .b4 { top: 557px; height: 70px; width: 8px; border-left: 3px solid #76b9ed; background: #4d5653; }
.app { position: relative; flex: 1; min-width: 0; display: flex; flex-direction: column; }

.tri { flex: none; width: 0; height: 0; border: 4px solid transparent; border-top-color: #f0f0f0; border-bottom: 0; }
.tri.small { border-width: 3px; border-bottom: 0; }
.tri.dim { border-top-color: #999; }
.tri.gray { border-top-color: #666; }
.tri.dark { border-top-color: #333; }
.tri.navy { border-top-color: #2a3144; }
.tri.right { border: 4px solid transparent; border-left-color: #fff; border-right: 0; }
.tri.right.dark { border-left-color: #333; }

.titlebar { display: flex; height: 24px; background: #fff; color: #000; }
.app-btn { position: relative; z-index: 6; width: 41px; height: 41px; flex: none; display: flex; align-items: center; gap: 1px; padding: 0 0 8px 3px; border: 1px solid #000; background: linear-gradient(#8c8c8c, #4c4c4c); }
.qat { display: flex; align-items: center; gap: 8px; width: 262px; flex: none; padding-left: 9px; background: linear-gradient(#8e8e8e, #505050); border-top: 1px solid #777; border-right: 1px solid #555; }
.qat > .tri { margin-left: -2px; }
.qat-more { display: flex; flex-direction: column; align-items: center; gap: 3px; }
.qat-more .bar { width: 8px; height: 2px; background: #f0f0f0; }
.title { flex: 1; margin: 0; display: flex; justify-content: center; gap: 16px; font: 12px/24px "Noto Sans", "Noto Sans CJK SC", sans-serif; }
.infocenter { display: flex; align-items: center; width: 447px; flex: none; padding: 0 4px 0 5px; gap: 8px; background: linear-gradient(#9a9a9a, #565656); color: #fff; }
.infocenter input { width: 180px; height: 22px; padding-left: 3px; background: #757575; border: 1px solid #3a3a3a; font-style: italic; font-size: 11px; margin: 0 -4px; }
.infocenter input::placeholder { color: #d8d8d8; opacity: 1; }
.login { display: flex; align-items: center; gap: 5px; margin-right: auto; }
.cart { margin-left: 1px; }
.near { margin-left: -4px; }
.vsep { width: 1px; height: 20px; background: #888; margin: 0 2px; }
.winbtns { display: flex; width: 163px; flex: none; justify-content: flex-end; gap: 33px; padding-right: 19px; }

.tabs { display: flex; align-items: center; height: 22px; padding: 1px 0 0 443px; background: #535353; border-top: 1px solid #2f2f2f; border-bottom: 1px solid #2f2f2f; color: #d0d0d0; }
.tabs a { margin-right: 20px; }
.pill { width: 14px; height: 8px; margin: 0 4px 0 12px; border-radius: 3px; background: #e6e9f0; display: grid; place-items: center; }
.pill i { border: 3px solid transparent; border-bottom-color: #333; border-top: 0; }

.ribbon { display: flex; height: 97px; background: linear-gradient(#4b4b4b, #3a3a3a); color: #f0f0f0; }
.panel { display: flex; flex-direction: column; background: #5c5c5c; border-right: 1px solid #3c3c3c; flex: none; }
.hidden-panel { width: 440px; }
.palettes { width: 176px; }
.ui { width: 210px; }
.panel-body { flex: 1; display: flex; align-items: flex-start; padding: 4px 0 0 2px; }
.clipped { flex-direction: column; align-items: flex-end; padding: 8px 7px 0 0; gap: 8px; }
.panel-title { display: flex; align-items: center; justify-content: center; gap: 6px; height: 18px; margin: 0 1px; padding-left: 2px; background: linear-gradient(#484848, #525252); position: relative; }
.ui .panel-title { padding: 0 8px 0 0; }
.launcher { position: absolute; right: 3px; }
.big { width: 42px; height: 72px; flex: none; display: flex; flex-direction: column; align-items: center; padding-top: 3px; line-height: 17px; white-space: nowrap; position: relative; }
.big span { margin-top: 2px; }
.palettes .big { width: 44px; margin-right: -4px; }
.big.on { border: 1px solid #2c4272; background: linear-gradient(#8fb0e0, #46608c); padding-top: 2px; }
.ui .panel-body { padding-left: 3px; }
.switch .tri { position: absolute; right: 1px; top: 52px; }
.small-grid { display: grid; grid-template-columns: 24px 24px; grid-auto-rows: 24px; margin-left: 4px; }
.small-grid button { display: grid; place-items: center; height: 22px; }
.small-grid .on { background: linear-gradient(#7b96c2, #48618e); border: 1px solid #2c4272; }
.tiles { display: flex; flex-direction: column; gap: 8px; padding: 4px 0 0 5px; }
.tiles button { display: flex; align-items: center; gap: 5px; height: 16px; white-space: nowrap; }
.strip { height: 30px; background: #363636; border-top: 1px solid #858585; border-bottom: 4px solid #5f5f5f; }

.canvas { position: relative; flex: 1; min-height: 460px; background: #212830; overflow: hidden; }
.drawing { position: absolute; inset: 0; width: 100%; height: 100%; }
.ink, .plate, .ucs { fill: none; stroke: #dcdee0; stroke-width: 1; }
.plate { stroke: #e8eaec; }
.mark { fill: #fff; font: bold 6px "Liberation Mono", monospace; text-anchor: middle; }
.note { fill: #fff; font: bold 5px "Noto Sans CJK SC", sans-serif; text-anchor: middle; }
.docbtns { position: absolute; right: 10px; top: 9px; display: flex; gap: 8px; }
.viewcube { position: absolute; right: 17px; top: 40px; display: flex; flex-direction: column; align-items: center; }
.viewcube svg { overflow: visible; }
.compass { fill: #a4a8ab; font: 18px "Noto Sans CJK SC", sans-serif; text-anchor: middle; }
.wcs { margin-top: 21px; width: 48px; height: 18px; border-radius: 4px; background: #93949f; border: 1px solid #7b7c88; color: #4a4d58; font: 11px/16px "Liberation Sans", sans-serif; display: flex; align-items: center; justify-content: space-evenly; }
.wcs i { border: 4px solid transparent; border-top-color: #b4b5c0; border-bottom: 0; }
.navbar { position: absolute; right: 4px; top: 236px; width: 32px; height: 212px; border-radius: 4px; background: #5a6064; box-shadow: 0 0 0 1px #1a1f25; }
.gauge { position: absolute; right: 2px; top: 144px; width: 5px; height: 48px; border-radius: 3px; background: #62676d; display: flex; align-items: flex-end; }
.gauge i { width: 5px; height: 28px; border-radius: 3px; background: #f47a20; }

.cmdline { position: absolute; left: 294px; right: 294px; bottom: 0; height: 27px; display: flex; align-items: center; background: #bcbcbe; border: 1px solid #6a6a6a; border-bottom: 0; }
.cmd-tools { display: flex; align-items: center; gap: 7px; width: 53px; height: 100%; padding-left: 3px; background: linear-gradient(#696969, #454545); }
.grip { width: 5px; height: 18px; background: repeating-linear-gradient(#999 0 2px, transparent 2px 4px); }
.custom { margin-left: 2px; }
.prompt { margin: 0 4px 0 5px; }
.cmdline input { flex: 1; min-width: 0; padding: 0 0 2px 7px; font-style: italic; font-size: 13px; }
.cmdline input::placeholder { color: #808080; opacity: 1; }
.up { border: 4px solid transparent; border-bottom-color: #222; border-top: 0; margin-right: 3px; }

.bottom { display: flex; justify-content: space-between; height: 29px; background: #363636; border-top: 1px solid #4c4c4c; }
.layouts { display: flex; padding-left: 6px; }
.layout { height: 18px; padding: 0 14px; line-height: 18px; color: #bcbcbc; background: linear-gradient(#505050, #666); margin-right: -2px; clip-path: polygon(0 0, 100% 0, calc(100% - 4px) 25%, calc(100% - 7px) 80%, calc(100% - 11px) 100%, 11px 100%, 7px 80%, 4px 25%); }
.layout.active { position: relative; padding-left: 17px; background: linear-gradient(#5a5a5a, #8c8c8c); color: #fff; font-weight: bold; }
.layout.add { display: grid; place-items: center; width: 24px; padding: 0; margin-left: 4px; background: #505050; clip-path: none; border-radius: 8px 0 12px 4px; }
.status { display: flex; gap: 1px; padding-right: 1px; }
.group { display: flex; height: 27px; border: 1px solid #858585; background: #4b4b4b; }
.tool, .drop { width: 24px; display: grid; place-items: center; }
.drop { width: 15px; }
.tool.on { background: #5c90c8; }
.word { color: #fff; }
.group:first-child .word { padding: 0 1px; }

.appmenu { position: absolute; z-index: 5; left: 0; top: 24px; width: 424px; height: 595px; display: flex; flex-direction: column; background: #d8d8d8; border: 1px solid #8c8c8c; color: #111; font-size: 11px; }
.search { position: relative; display: flex; margin: 8px 7px 8px 143px; height: 20px; background: #fff; border: 1px solid #aaacb4; }
.search input { flex: 1; min-width: 0; padding-left: 4px; }
.caret { position: absolute; left: 2px; top: 2px; width: 1px; height: 14px; background: #000; }
.search button { width: 15px; border-left: 1px solid #ccc; display: grid; place-items: center; }
.menu-cols { flex: 1; display: flex; }
.menu-left { width: 142px; flex: none; }
.toggles { display: flex; margin: 7px 0 9px 90px; }
.toggles button { width: 22px; height: 22px; display: grid; place-items: center; border: 1px solid #999; margin-right: -1px; }
.toggles .sel { background: #bcdcf8; border-color: #1467c0; position: relative; }
.entry { display: flex; align-items: center; width: 129px; height: 46px; margin-left: 11px; padding-left: 5px; gap: 5px; text-align: left; line-height: 16px; }
.entry.sep { height: 48px; margin-top: 1px; border-top: 1px solid #b4b4b4; padding-top: 1px; }
.entry span { width: 50px; margin-right: auto; }
.entry .tri { margin-right: 14px; }
.menu-right { flex: 1; display: flex; flex-direction: column; background: #f1f1f1; border-left: 1px solid #e8e8e8; padding: 11px 16px 12px 8px; box-shadow: -1px 0 #c4c4c4; }
h2 { margin: 0 0 8px; display: flex; align-items: center; gap: 4px; font: 11px/16px "Noto Sans", "Noto Sans CJK SC", sans-serif; color: #000; }
.combos { display: flex; gap: 5px; }
.combo { display: flex; align-items: center; height: 22px; border: 1px solid #999; background: #c6c6c6; padding: 0 3px 0 2px; gap: 4px; }
.combo select { appearance: none; width: 68px; color: #444; }
.combo.view { padding-left: 3px; }
ul { list-style: none; margin: 15px 0 0; padding: 0 9px 0 5px; }
li { display: flex; align-items: center; gap: 3px; padding: 5px 0; line-height: 16px; }
li a { width: 184px; margin-right: auto; color: #000; }
.actions { display: flex; justify-content: flex-end; gap: 21px; margin-top: auto; }
.actions button { height: 26px; padding: 0 4px; border: 1px solid #888; white-space: nowrap; }
.actions button:last-child { padding: 0 5px; }

.watermark { position: absolute; z-index: 9; right: 10px; bottom: 8px; font: 16px/22px "Liberation Sans", sans-serif; color: rgba(225, 225, 225, 0.75); }
</style>
